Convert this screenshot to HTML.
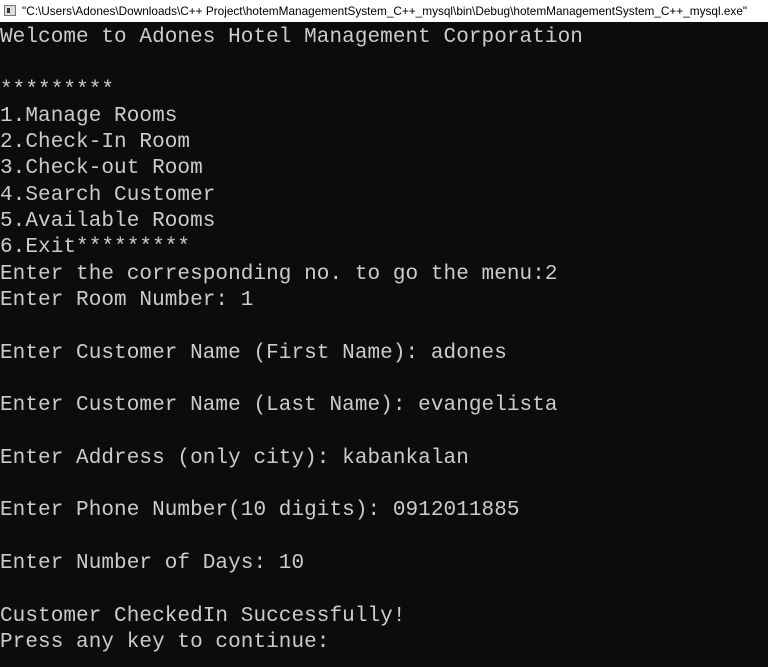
<!DOCTYPE html>
<html><head><meta charset="utf-8"><style>
html,body{margin:0;padding:0;width:768px;height:667px;overflow:hidden;background:#0c0c0c;}
.title{position:absolute;left:0;top:0;width:768px;height:22px;background:#fff;font-family:"Liberation Sans",sans-serif;font-size:11.8px;color:#000;line-height:22px;white-space:nowrap;}
.title .ic{position:absolute;left:4px;top:5px;width:12px;height:11px;border:1px solid #777;background:#ddd;box-sizing:border-box;}
.title .ic:after{content:"";position:absolute;left:2px;top:2px;width:3px;height:5px;background:#333;}
.title span{position:absolute;left:22px;top:0;}
pre{position:absolute;left:0;top:25px;margin:0;font-family:"Liberation Mono",monospace;font-size:21px;letter-spacing:0.07px;line-height:26.3px;color:#cccccc;}
</style></head><body>
<div class="title"><div class="ic"></div><span>"C:\Users\Adones\Downloads\C++ Project\hotemManagementSystem_C++_mysql\bin\Debug\hotemManagementSystem_C++_mysql.exe"</span></div>
<pre>Welcome to Adones Hotel Management Corporation

*********
1.Manage Rooms
2.Check-In Room
3.Check-out Room
4.Search Customer
5.Available Rooms
6.Exit*********
Enter the corresponding no. to go the menu:2
Enter Room Number: 1

Enter Customer Name (First Name): adones

Enter Customer Name (Last Name): evangelista

Enter Address (only city): kabankalan

Enter Phone Number(10 digits): 0912011885

Enter Number of Days: 10

Customer CheckedIn Successfully!
Press any key to continue:</pre>
</body></html>
